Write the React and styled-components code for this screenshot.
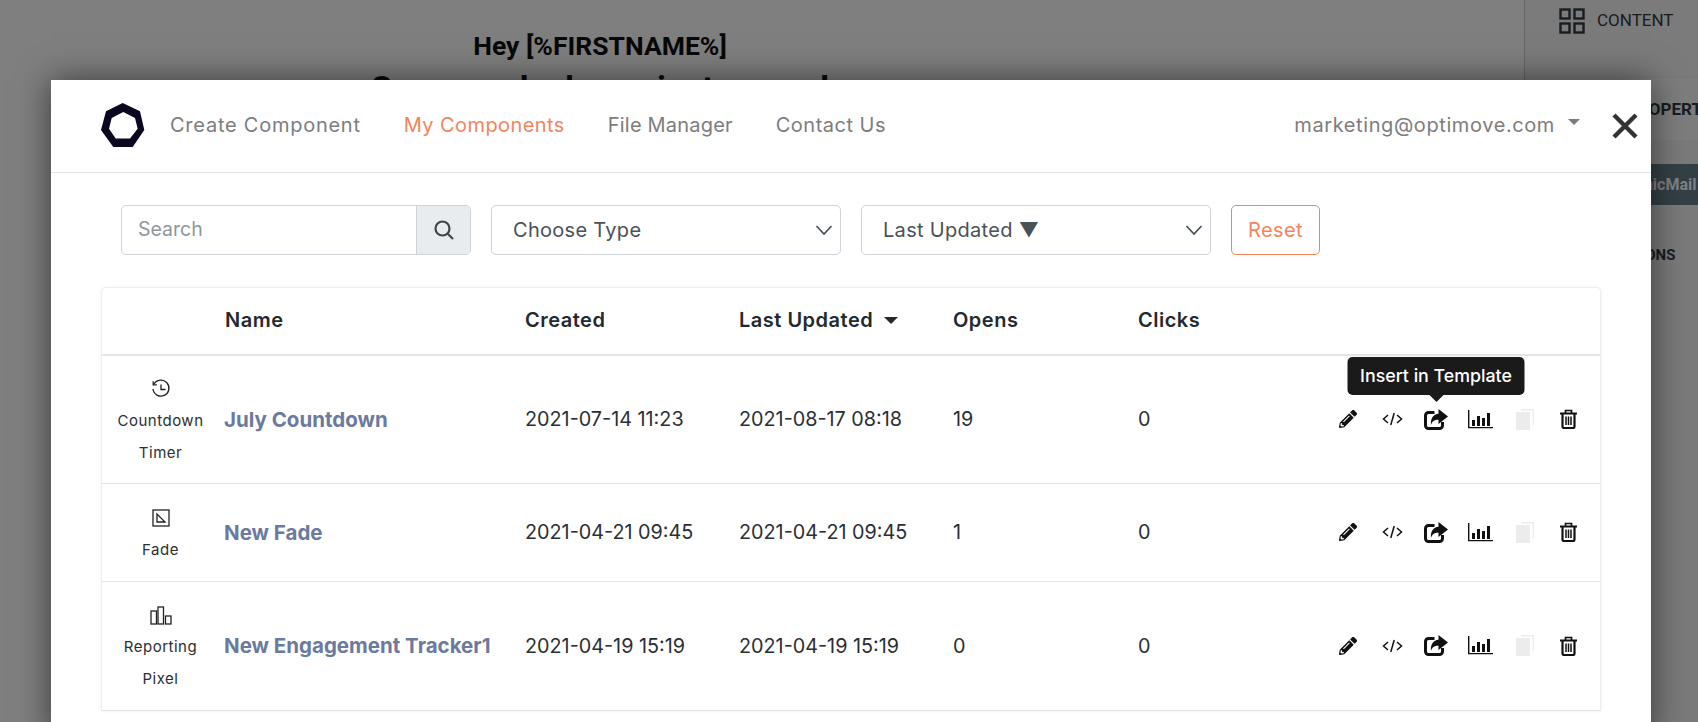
import React from 'react';
import styled, { createGlobalStyle } from 'styled-components';
import { FaPencilAlt } from 'react-icons/fa';

const Global = createGlobalStyle`
  html, body { margin: 0; padding: 0; background: #fff; }
  body { font-family: Inter, "Liberation Sans", sans-serif; }
  * { box-sizing: border-box; }
`;

const UI = 'Inter, "Liberation Sans", sans-serif';

const Page = styled.div`
  position: relative;
  width: 1698px;
  height: 722px;
  overflow: hidden;
  display: flex;
`;
const Canvas = styled.main`
  flex: 1;
  padding: 30px 324px 0 0;
  text-align: center;
  font-family: Roboto, sans-serif;
  font-weight: 700;
  color: #111;
`;
const Greeting = styled.div`
  font-size: 26.5px;
  line-height: 32px;
`;
const Subline = styled.div`
  font-size: 34px;
  line-height: 44px;
  margin-top: 4px;
  white-space: nowrap;
`;
const Side = styled.aside`
  width: 174px;
  background: #f5f5f5;
  border-left: 1px solid #c4cdcd;
  font-family: Roboto, sans-serif;
  color: #2f3a40;
  white-space: nowrap;
  overflow: hidden;
`;
const SideHead = styled.div`
  height: 78px;
  display: flex;
  align-items: flex-start;
  padding: 8px 0 0 34px;
  gap: 12px;
  font-size: 17px;
  line-height: 25px;
  background: #f7f7f7;
  border-bottom: 1px solid #eee;
`;
const SideTab = styled.div`
  height: 62px;
  padding: 20px 0 0 102px;
  font-size: 17px;
  line-height: 22px;
  font-weight: 700;
  background: #fbfbfb;
`;
const SideBand = styled.div`
  margin-top: 24px;
  height: 41px;
  background: #66808a;
  color: #fff;
  font-size: 16px;
  line-height: 41px;
  font-weight: 700;
  padding-left: 78px;
`;
const SideLabel = styled.div`
  padding: 40px 0 0 87px;
  font-size: 15px;
  line-height: 20px;
  font-weight: 700;
`;
const Overlay = styled.div`
  position: absolute;
  inset: 0;
  background: rgba(0, 0, 0, 0.5);
`;
const Modal = styled.section`
  position: absolute;
  left: 51px;
  top: 80px;
  width: 1600px;
  height: 660px;
  background: #fff;
  box-shadow: 0 0 32px rgba(0, 0, 0, 0.55);
  font-family: ${UI};
`;
const Nav = styled.nav`
  height: 93px;
  border-bottom: 1px solid #e3e5e8;
  display: flex;
  align-items: center;
  padding: 0 13px 0 50px;
`;
const Logo = styled.svg`
  width: 44px;
  height: 45px;
  margin-right: 25px;
  margin-top: -2px;
`;
const NavLink = styled.a`
  font-size: 20px;
  letter-spacing: ${p => p.$track}px;
  margin-top: -2px;
  color: ${p => (p.$active ? '#f5845c' : '#7d7d7d')};
  margin-right: 43px;
  white-space: nowrap;
`;
const Email = styled.div`
  margin-left: auto;
  margin-top: -2px;
  display: flex;
  align-items: center;
  font-size: 20px;
  letter-spacing: 0.6px;
  color: #7d7d7d;
`;
const Caret = styled.span`
  width: 0;
  height: 0;
  margin: -6px 0 0 13px;
  border-left: 6px solid transparent;
  border-right: 6px solid transparent;
  border-top: 6px solid #7d7d7d;
`;
const Close = styled.svg`
  width: 26px;
  height: 26px;
  margin-left: 32px;
`;
const Filters = styled.div`
  display: flex;
  padding: 32px 0 0 70px;
  gap: 20px;
  height: 114px;
`;
const SearchBox = styled.div`
  width: 350px;
  height: 50px;
  display: flex;
  border: 1px solid #ced4da;
  border-radius: 5px;
  overflow: hidden;
`;
const SearchInput = styled.div`
  flex: 1;
  padding-left: 16px;
  font-size: 19.5px;
  line-height: 47px;
  color: #8f969c;
`;
const SearchBtn = styled.div`
  width: 54px;
  background: #e9ecef;
  border-left: 1px solid #ced4da;
  display: flex;
  align-items: center;
  justify-content: center;
`;
const Select = styled.div`
  width: 350px;
  height: 50px;
  border: 1px solid #ced4da;
  border-radius: 5px;
  display: flex;
  align-items: center;
  justify-content: space-between;
  padding: 0 7px 0 21px;
  font-size: 20px;
  letter-spacing: 0.3px;
  color: #4a5157;
`;
const Chevron = styled.svg`
  width: 18px;
  height: 12px;
`;
const ResetBtn = styled.button`
  width: 89px;
  height: 50px;
  background: #fff;
  border: 1px solid #f5845c;
  border-radius: 5px;
  color: #f5845c;
  font-family: ${UI};
  font-size: 20px;
  letter-spacing: 0.4px;
`;
const Table = styled.div`
  margin-left: 50px;
  width: 1500px;
  border-left: 1px solid #eceef2;
  border-right: 1px solid #eceef2;
  border-top: 1px solid #eceef2;
  border-radius: 5px 5px 0 0;
  box-shadow: 0 0 4px rgba(0, 0, 0, 0.06);
`;
const COLS = '117px 306px 214px 214px 185px 188px 266px';
const HeadRow = styled.div`
  display: grid;
  grid-template-columns: ${COLS};
  height: 68px;
  padding-bottom: 2px;
  align-items: center;
  border-bottom: 2px solid #e2e4ea;
  font-size: 20px;
  letter-spacing: 0.5px;
  font-weight: 600;
  color: #24292e;
`;
const HeadName = styled.div`
  padding-left: 6px;
`;
const HeadSort = styled.div`
  display: flex;
  align-items: center;
  gap: 11px;
`;
const SortMark = styled.span`
  width: 0;
  height: 0;
  border-left: 7px solid transparent;
  border-right: 7px solid transparent;
  border-top: 7px solid #24292e;
`;
const Row = styled.div`
  display: grid;
  grid-template-columns: ${COLS};
  height: ${p => p.$h}px;
  padding-bottom: 1px;
  align-items: center;
  border-bottom: 1px solid #e2e4ea;
  font-size: 19.8px;
  color: #2a2f33;
`;
const TypeCell = styled.div`
  display: flex;
  flex-direction: column;
  align-items: center;
  padding-top: 8px;
  font-size: 15px;
  letter-spacing: 0.5px;
  line-height: 32px;
  color: #2a2f33;
`;
const TypeIcon = styled.svg`
  width: 22px;
  height: 22px;
  display: block;
  margin-bottom: 5px;
`;
const Name = styled.div`
  padding-left: 5px;
  font-weight: 700;
  font-size: 20.5px;
  color: #6b7a9e;
  white-space: nowrap;
`;
const Actions = styled.div`
  display: grid;
  grid-template-columns: 44px 44px 44px 45px 43px 44px;
  align-items: center;
  justify-items: center;
  color: #111;
`;
const Slot = styled.div`
  position: relative;
  display: flex;
  align-items: center;
  justify-content: center;
  height: 26px;
  font-size: 18px;
`;
const Tooltip = styled.div`
  position: absolute;
  bottom: 37px;
  left: 50%;
  transform: translateX(-50%);
  width: 177px;
  height: 38px;
  border-radius: 5px;
  background: #1a1a1a;
  color: #fff;
  font-size: 17.8px;
  font-weight: 500;
  line-height: 37px;
  text-align: center;
  white-space: nowrap;
  &::after {
    content: '';
    position: absolute;
    left: 50%;
    bottom: -7px;
    margin-left: -7px;
    border-left: 7px solid transparent;
    border-right: 7px solid transparent;
    border-top: 7px solid #1a1a1a;
  }
`;

const CountdownIcon = () => (
  <TypeIcon viewBox="0 0 22 22" fill="none" stroke="#222" strokeWidth="1.3">
    <path d="M4 6.2A8 8 0 1 1 3 11" />
    <path d="M3.2 3.2v3.6h3.6" />
    <path d="M11 6.500V11.500h4.500" />
  </TypeIcon>
);
const FadeIcon = () => (
  <TypeIcon viewBox="0 0 22 22" fill="none" stroke="#222" strokeWidth="1.3">
    <rect x="3" y="3" width="16" height="16" />
    <path d="M7 7v8h8z" />
  </TypeIcon>
);
const PixelIcon = () => (
  <TypeIcon viewBox="0 0 22 22" fill="none" stroke="#222" strokeWidth="1.3">
    <rect x="1" y="7" width="5.500" height="13" />
    <rect x="8" y="3" width="5.500" height="17" />
    <rect x="15.500" y="12" width="5.500" height="8" />
  </TypeIcon>
);
const CodeIcon = () => (
  <svg width="21" height="14" viewBox="0 0 21 14" fill="none" stroke="#111" strokeWidth="1.5">
    <path d="M6 3 1.500 7 6 11" />
    <path d="M15 3l4.500 4L15 11" />
    <path d="M12.200 1 8.800 13" />
  </svg>
);
const ShareIcon = () => (
  <svg width="24" height="21" viewBox="0 0 24 21">
    <path d="M10.500 3.500H4.500a3 3 0 0 0-3 3v10a3 3 0 0 0 3 3h11a3 3 0 0 0 3-3v-3.500" fill="none" stroke="#111" strokeWidth="3" />
    <path d="M14.500 0 24 7.500 14.500 15v-4.200C10 10.800 8 12.500 7 16c-.8-6.500 2.500-11 7.500-11.300z" fill="#111" />
  </svg>
);
const ChartIcon = () => (
  <svg width="25" height="19" viewBox="0 0 25 19">
    <path d="M.7 0v17.600H25" fill="none" stroke="#111" strokeWidth="1.4" />
    <rect x="4" y="10" width="3" height="6" fill="#111" />
    <rect x="9" y="6" width="3" height="10" fill="#111" />
    <rect x="14" y="8" width="3" height="8" fill="#111" />
    <rect x="19" y="3" width="3" height="13" fill="#111" />
  </svg>
);
const CopyIcon = () => (
  <svg width="18" height="21" viewBox="0 0 18 21">
    <path d="M5 0h13v16h-1.400V1.400H5z" fill="#ececec" />
    <rect x="0" y="3" width="14" height="18" fill="#ececec" />
  </svg>
);
const TrashIcon = () => (
  <svg width="17" height="20" viewBox="0 0 17 20" fill="none" stroke="#111">
    <path d="M0 4.500h17" strokeWidth="2" />
    <path d="M5.500 4V1.500h6V4" strokeWidth="1.700" />
    <path d="M2.500 5v12.500a1.500 1.500 0 0 0 1.500 1.500h9a1.500 1.500 0 0 0 1.500-1.500V5" strokeWidth="2.200" />
    <path d="M6 7.500v8.500M8.500 7.500v8.500M11 7.500v8.500" strokeWidth="1.500" />
  </svg>
);
const SearchGlyph = () => (
  <svg width="20" height="20" viewBox="0 0 20 20" fill="none" stroke="#3f474d" strokeWidth="2.200">
    <circle cx="8.500" cy="8.500" r="7" />
    <path d="M13.500 13.500 19 19" />
  </svg>
);

const rows = [
  { h: 128, icon: <CountdownIcon />, type: ['Countdown', 'Timer'], name: 'July Countdown', created: '2021-07-14 11:23', updated: '2021-08-17 08:18', opens: '19', tip: true },
  { h: 98, icon: <FadeIcon />, type: ['Fade'], name: 'New Fade', created: '2021-04-21 09:45', updated: '2021-04-21 09:45', opens: '1' },
  { h: 129, icon: <PixelIcon />, type: ['Reporting', 'Pixel'], name: 'New Engagement Tracker1', created: '2021-04-19 15:19', updated: '2021-04-19 15:19', opens: '0' },
];

const ChevronDown = () => (
  <Chevron viewBox="0 0 18 12" fill="none" stroke="#444c52" strokeWidth="1.6"><path d="M1.500 2 9 10l7.500-8" /></Chevron>
);

export default function App() {
  return (
    <Page>
      <Global />
      <Canvas>
        <Greeting>Hey [%FIRSTNAME%]</Greeting>
        <Subline>Summer deals are just around</Subline>
      </Canvas>
      <Side>
        <SideHead>
          <svg width="26" height="26" viewBox="0 0 26 26" fill="none" stroke="#2f3a40" strokeWidth="2.400">
            <rect x="1.500" y="1.500" width="9" height="9" /><rect x="15.500" y="1.500" width="9" height="9" />
            <rect x="1.500" y="15.500" width="9" height="9" /><rect x="15.500" y="15.500" width="9" height="9" />
          </svg>
          CONTENT
        </SideHead>
        <SideTab>PROPERTIES</SideTab>
        <SideBand>DynamicMail</SideBand>
        <SideLabel>ACTIONS</SideLabel>
      </Side>
      <Overlay />
      <Modal>
        <Nav>
          <Logo viewBox="0 0 44 45">
            <path fillRule="evenodd" fill="#0d0620" d="M21.700 0 39 8.300 43.300 27 31.700 44H12.300L0 27 5 8.300ZM22.300 9 10.700 15 8 25.700 14.700 35.500H29L36.700 25.700 34 15Z" />
          </Logo>
          <NavLink $track={0.75}>Create Component</NavLink>
          <NavLink $track={0.42} $active>My Components</NavLink>
          <NavLink $track={0.2}>File Manager</NavLink>
          <NavLink $track={0.49}>Contact Us</NavLink>
          <Email>marketing@optimove.com<Caret /></Email>
          <Close viewBox="0 0 26 26" fill="none" stroke="#333" strokeWidth="4.400"><path d="M2 2l22 22M24 2 2 24" /></Close>
        </Nav>
        <Filters>
          <SearchBox>
            <SearchInput>Search</SearchInput>
            <SearchBtn><SearchGlyph /></SearchBtn>
          </SearchBox>
          <Select>Choose Type<ChevronDown /></Select>
          <Select>Last Updated ▼<ChevronDown /></Select>
          <ResetBtn>Reset</ResetBtn>
        </Filters>
        <Table>
          <HeadRow>
            <div />
            <HeadName>Name</HeadName>
            <div>Created</div>
            <HeadSort>Last Updated<SortMark /></HeadSort>
            <div>Opens</div>
            <div>Clicks</div>
            <div />
          </HeadRow>
          {rows.map(r => (
            <Row key={r.name} $h={r.h}>
              <TypeCell>
                {r.icon}
                {r.type.map(t => <span key={t}>{t}</span>)}
              </TypeCell>
              <Name>{r.name}</Name>
              <div>{r.created}</div>
              <div>{r.updated}</div>
              <div>{r.opens}</div>
              <div>0</div>
              <Actions>
                <Slot><FaPencilAlt /></Slot>
                <Slot><CodeIcon /></Slot>
                <Slot>
                  <ShareIcon />
                  {r.tip && <Tooltip>Insert in Template</Tooltip>}
                </Slot>
                <Slot><ChartIcon /></Slot>
                <Slot><CopyIcon /></Slot>
                <Slot><TrashIcon /></Slot>
              </Actions>
            </Row>
          ))}
        </Table>
      </Modal>
    </Page>
  );
}
